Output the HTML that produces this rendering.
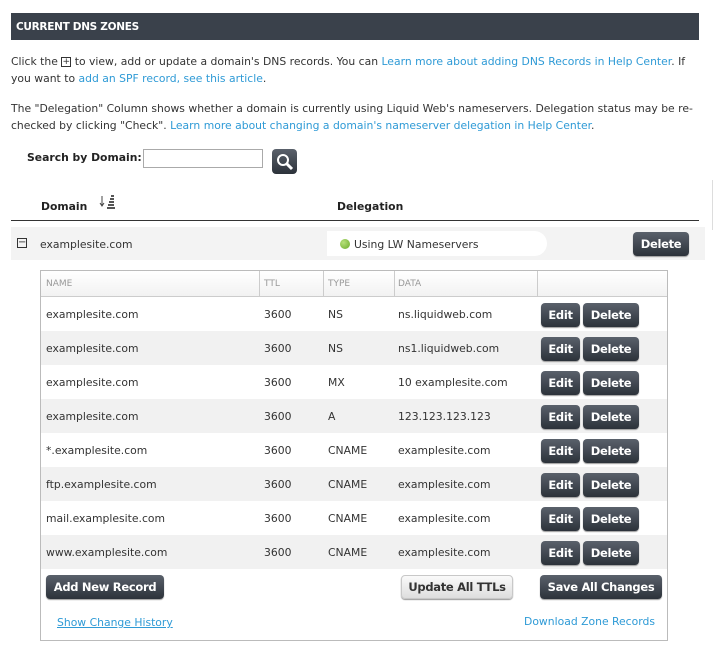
<!DOCTYPE html>
<html><head><meta charset="utf-8"><style>
*{margin:0;padding:0;box-sizing:border-box}
body{width:721px;height:653px;background:#fff;font-family:"DejaVu Sans","Liberation Sans",sans-serif;font-size:10.8px;color:#333;position:relative;overflow:hidden}
.a{position:absolute;white-space:nowrap}
a{color:#2e9ad6;text-decoration:none}
.hdr{left:11px;top:13px;width:688px;height:27px;background:#3a414b;color:#fff;font-weight:bold;font-size:10.5px;padding:8px 5px;letter-spacing:-0.3px}
.btn{position:absolute;height:24px;border-radius:4px;background:linear-gradient(#5a616b,#2c323a);color:#fff;font-weight:bold;font-size:11.5px;text-align:center;line-height:24px;box-shadow:0 1px 1px #999;font-family:"DejaVu Sans",sans-serif;letter-spacing:-0.3px}
.lbtn{background:linear-gradient(#fafafa,#dedede);color:#333;border:1px solid #c8c8c8;line-height:22px}
.box{left:40px;top:270px;width:628px;height:371px;border:1px solid #bbb}
.row{position:absolute;left:41px;width:626px;height:34px}
.row span{position:absolute;top:11px;white-space:nowrap}
</style></head><body>
<div class="a hdr">CURRENT DNS ZONES</div>
<div class="a" style="left:11px;top:53px;line-height:17px">Click the <span style="display:inline-block;width:10px;height:10px;border:1px solid #333;font-size:9px;line-height:8px;text-align:center;vertical-align:1px">+</span> to view, add or update a domain's DNS records. You can <a>Learn more about adding DNS Records in Help Center</a>. If<br>you want to <a>add an SPF record, see this article</a>.</div>
<div class="a" style="left:11px;top:100px;line-height:17px">The "Delegation" Column shows whether a domain is currently using Liquid Web's nameservers. Delegation status may be re-<br>checked by clicking "Check". <a>Learn more about changing a domain's nameserver delegation in Help Center</a>.</div>
<div class="a" style="left:27px;top:151px;font-weight:bold;color:#222">Search by Domain:</div>
<div class="a" style="left:143px;top:149px;width:120px;height:19px;border:1px solid #aaa"></div>
<div class="a" style="left:272px;top:149px;width:25px;height:25px;border-radius:4px;background:linear-gradient(#5a616b,#2c323a)"><svg width="25" height="25"><circle cx="11" cy="11" r="5" fill="none" stroke="#fff" stroke-width="2"/><path d="M15 15l5 5" stroke="#fff" stroke-width="3"/></svg></div>
<div class="a" style="left:41px;top:200px;font-weight:bold;color:#222">Domain</div>
<div class="a" style="left:99px;top:194px"><svg width="18" height="18"><path d="M3 2v10M1 9l2 3 2-3" stroke="#444" fill="none"/><rect x="8" y="13" width="8" height="2" fill="#555"/><rect x="9" y="10" width="6" height="2" fill="#555"/><rect x="10" y="7" width="5" height="2" fill="#555"/><rect x="11" y="4" width="4" height="2" fill="#555"/><rect x="12" y="1" width="3" height="2" fill="#555"/></svg></div>
<div class="a" style="left:337px;top:200px;font-weight:bold;color:#222">Delegation</div>
<div class="a" style="left:11px;top:220px;width:688px;height:1px;background:#333"></div>
<div class="a" style="left:712px;top:180px;width:1px;height:50px;background:#ddd"></div>
<div class="a" style="left:11px;top:227px;width:694px;height:33px;background:#f3f3f3"></div>
<div class="a" style="left:17px;top:238px;width:10px;height:10px;border:1px solid #333;font-size:10px;line-height:7px;text-align:center">−</div>
<div class="a" style="left:40px;top:238px">examplesite.com</div>
<div class="a" style="left:327px;top:231px;width:220px;height:25px;background:#fff;border-radius:0 13px 13px 0"></div>
<div class="a" style="left:340px;top:239px;width:10px;height:10px;border-radius:50%;background:radial-gradient(circle at 35% 35%,#b6e07a,#6aaa2a)"></div>
<div class="a" style="left:354px;top:238px">Using LW Nameservers</div>
<div class="btn" style="left:633px;top:232px;width:56px">Delete</div>
<div class="a box"></div>
<div class="row" style="top:271px;height:26px;background:linear-gradient(#fff,#f2f2f2);border-bottom:1px solid #ccc;color:#999;font-size:9px">
<span style="left:5px;top:8px">NAME</span><span style="left:223px;top:8px">TTL</span><span style="left:287px;top:8px">TYPE</span><span style="left:357px;top:8px">DATA</span>
<i style="position:absolute;left:218px;top:0;width:1px;height:26px;background:#ccc"></i><i style="position:absolute;left:282px;top:0;width:1px;height:26px;background:#ccc"></i><i style="position:absolute;left:353px;top:0;width:1px;height:26px;background:#ccc"></i><i style="position:absolute;left:496px;top:0;width:1px;height:26px;background:#ccc"></i>
</div>
<div class="row" style="top:297px"><span style="left:5px">examplesite.com</span><span style="left:223px">3600</span><span style="left:287px">NS</span><span style="left:357px">ns.liquidweb.com</span><div class="btn" style="left:500px;top:6px;width:39px">Edit</div><div class="btn" style="left:542px;top:6px;width:56px">Delete</div></div>
<div class="row" style="top:331px;background:#f1f1f1"><span style="left:5px">examplesite.com</span><span style="left:223px">3600</span><span style="left:287px">NS</span><span style="left:357px">ns1.liquidweb.com</span><div class="btn" style="left:500px;top:6px;width:39px">Edit</div><div class="btn" style="left:542px;top:6px;width:56px">Delete</div></div>
<div class="row" style="top:365px"><span style="left:5px">examplesite.com</span><span style="left:223px">3600</span><span style="left:287px">MX</span><span style="left:357px">10 examplesite.com</span><div class="btn" style="left:500px;top:6px;width:39px">Edit</div><div class="btn" style="left:542px;top:6px;width:56px">Delete</div></div>
<div class="row" style="top:399px;background:#f1f1f1"><span style="left:5px">examplesite.com</span><span style="left:223px">3600</span><span style="left:287px">A</span><span style="left:357px">123.123.123.123</span><div class="btn" style="left:500px;top:6px;width:39px">Edit</div><div class="btn" style="left:542px;top:6px;width:56px">Delete</div></div>
<div class="row" style="top:433px"><span style="left:5px">*.examplesite.com</span><span style="left:223px">3600</span><span style="left:287px">CNAME</span><span style="left:357px">examplesite.com</span><div class="btn" style="left:500px;top:6px;width:39px">Edit</div><div class="btn" style="left:542px;top:6px;width:56px">Delete</div></div>
<div class="row" style="top:467px;background:#f1f1f1"><span style="left:5px">ftp.examplesite.com</span><span style="left:223px">3600</span><span style="left:287px">CNAME</span><span style="left:357px">examplesite.com</span><div class="btn" style="left:500px;top:6px;width:39px">Edit</div><div class="btn" style="left:542px;top:6px;width:56px">Delete</div></div>
<div class="row" style="top:501px"><span style="left:5px">mail.examplesite.com</span><span style="left:223px">3600</span><span style="left:287px">CNAME</span><span style="left:357px">examplesite.com</span><div class="btn" style="left:500px;top:6px;width:39px">Edit</div><div class="btn" style="left:542px;top:6px;width:56px">Delete</div></div>
<div class="row" style="top:535px;background:#f1f1f1"><span style="left:5px">www.examplesite.com</span><span style="left:223px">3600</span><span style="left:287px">CNAME</span><span style="left:357px">examplesite.com</span><div class="btn" style="left:500px;top:6px;width:39px">Edit</div><div class="btn" style="left:542px;top:6px;width:56px">Delete</div></div>
<div class="btn" style="left:46px;top:575px;width:118px">Add New Record</div>
<div class="btn lbtn" style="left:401px;top:575px;width:112px">Update All TTLs</div>
<div class="btn" style="left:540px;top:575px;width:122px">Save All Changes</div>
<div class="a" style="left:57px;top:616px"><a style="text-decoration:underline">Show Change History</a></div>
<div class="a" style="left:524px;top:615px"><a>Download Zone Records</a></div>
</body></html>
